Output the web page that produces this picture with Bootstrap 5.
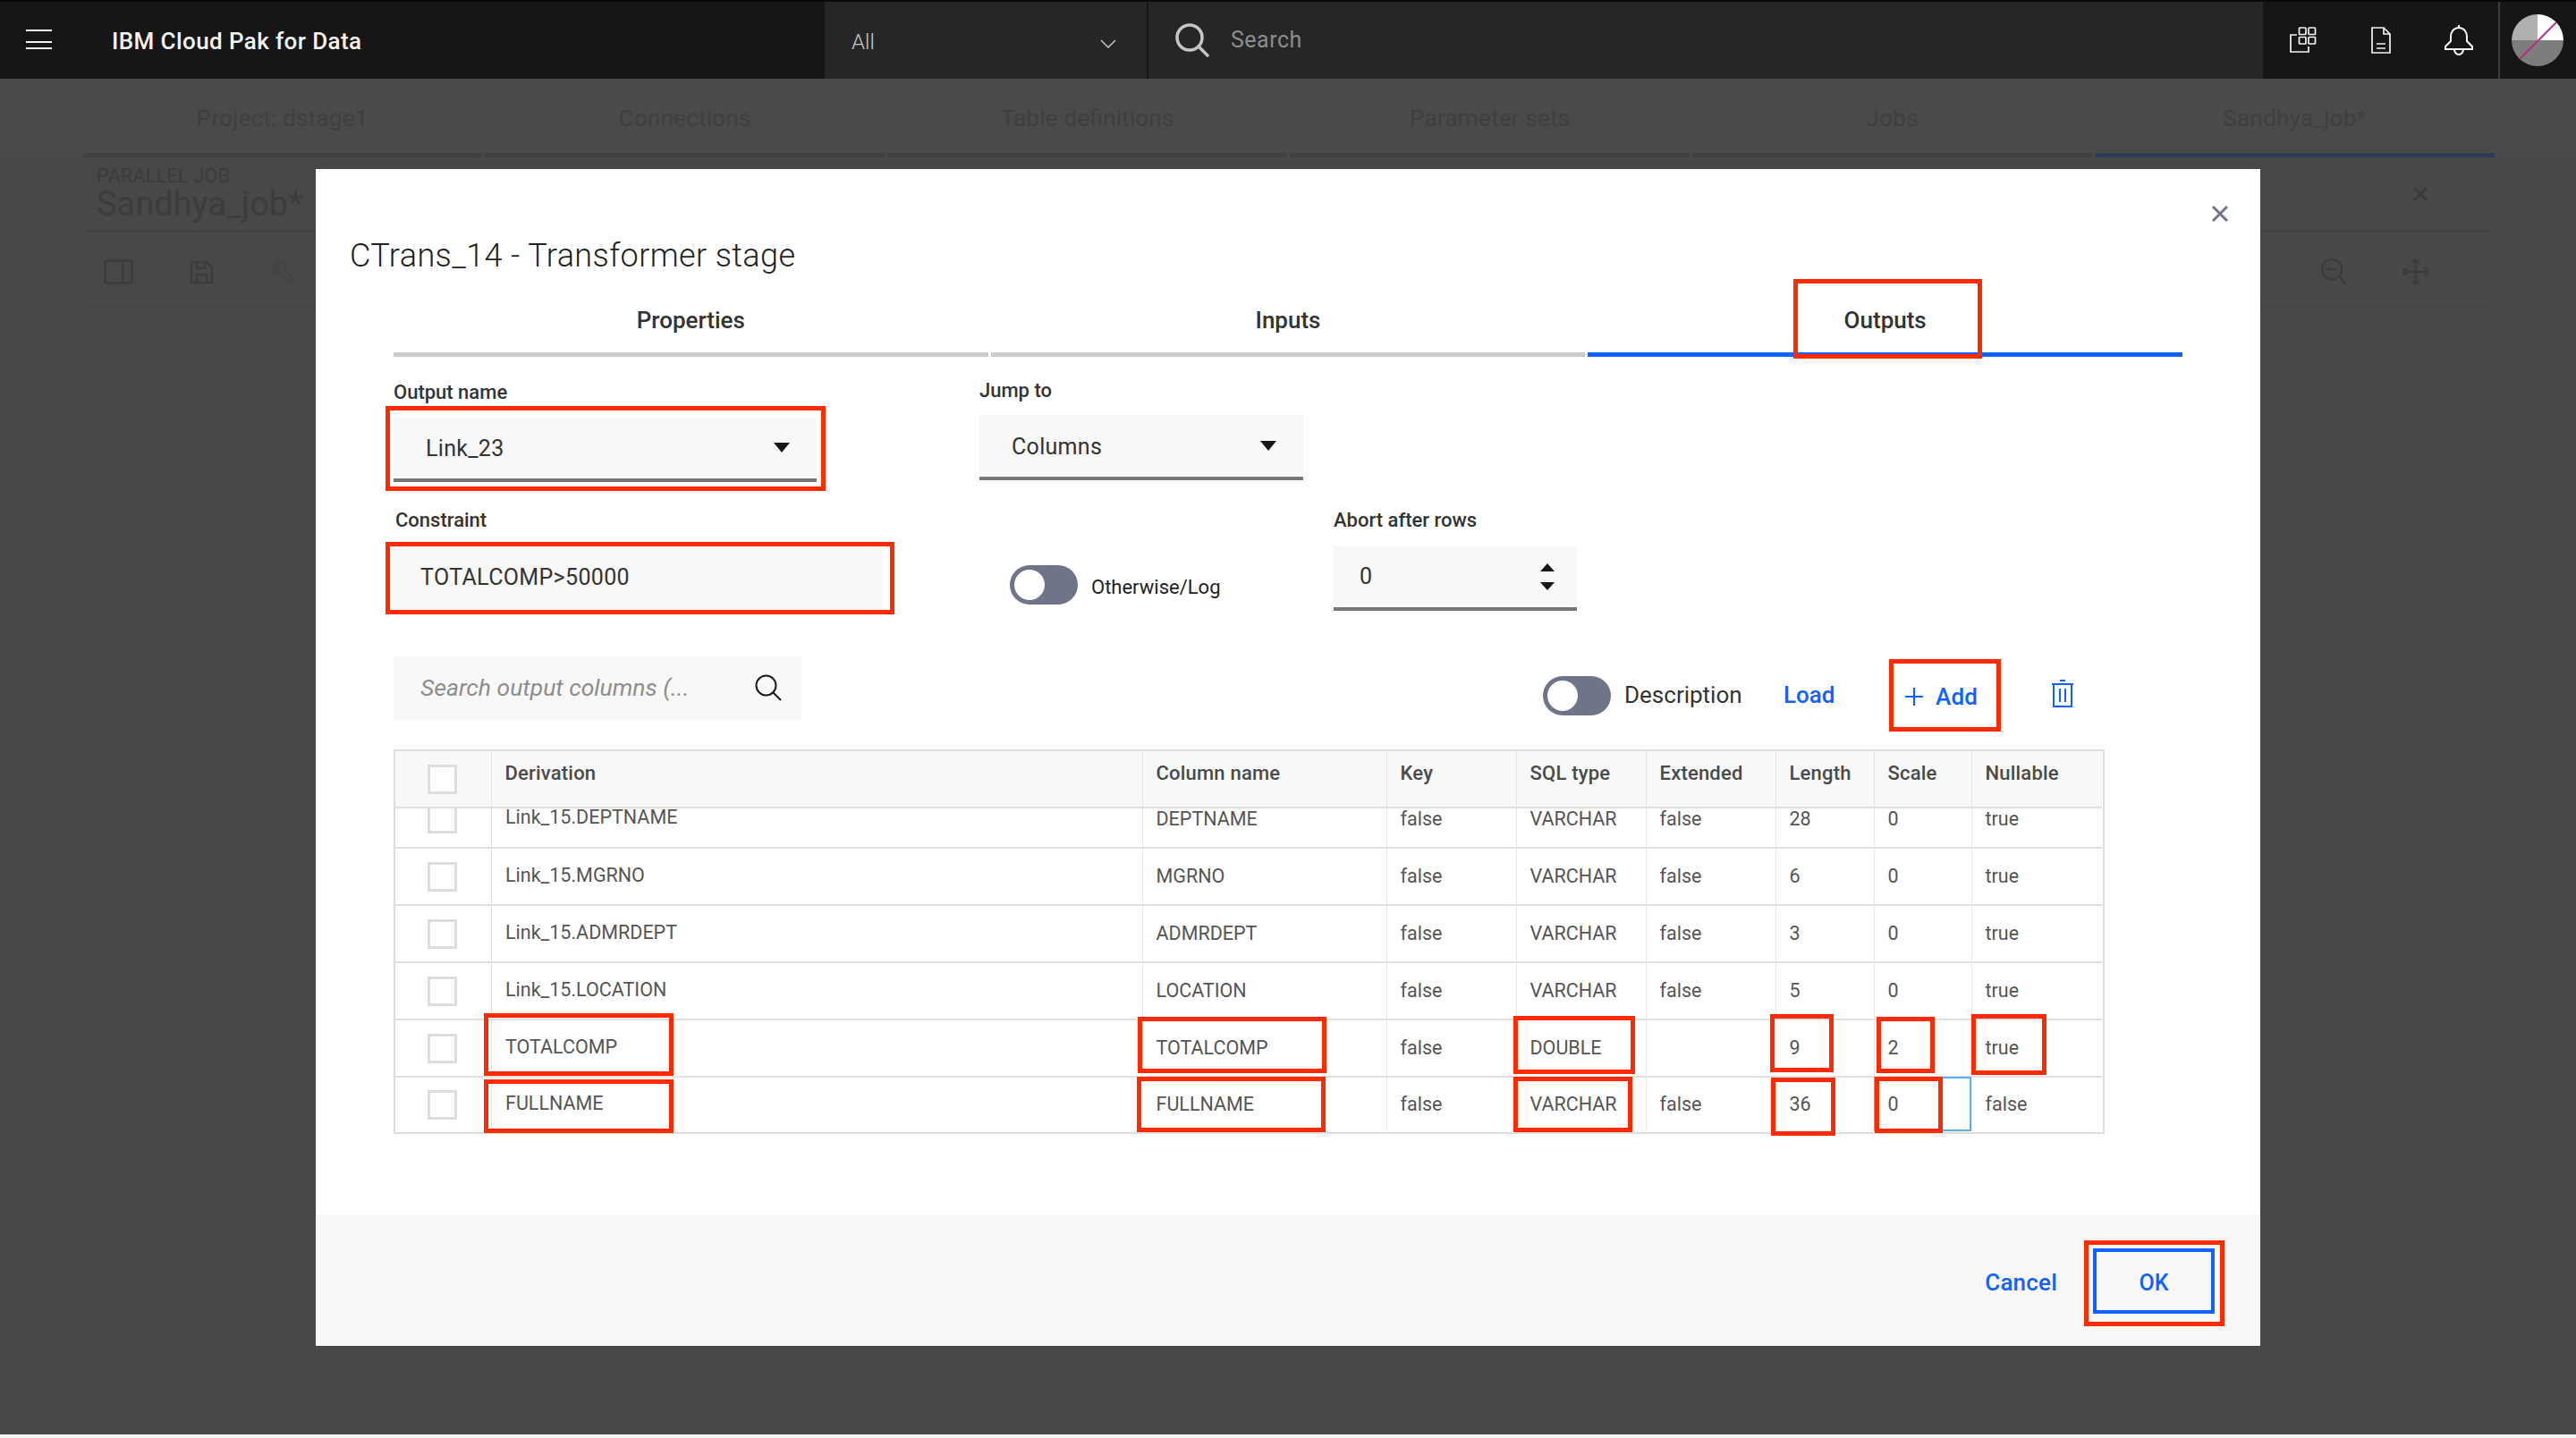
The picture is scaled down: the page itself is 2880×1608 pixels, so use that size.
<!DOCTYPE html>
<html lang="en">
<head>
<meta charset="utf-8">
<title>IBM Cloud Pak for Data</title>
<link href="https://cdn.jsdelivr.net/npm/bootstrap@5.3.0/dist/css/bootstrap.min.css" rel="stylesheet">
<style>
html,body{width:2880px;height:1608px;overflow:hidden;margin:0;background:#f4f4f4;font-family:Roboto,"Liberation Sans",sans-serif;color:#333}
.app-shell{position:relative;width:2880px;height:1604px;background:#484848;overflow:hidden}
/* top bar */
.top-bar{height:88px;padding:0;border-top:2px solid #0a0a0a;background:#161616;flex-wrap:nowrap;justify-content:flex-start;align-items:stretch}
.burger-zone{width:125px;padding-left:29px}
.brand-name{width:797px;padding:2px 0 0;margin:0;font-size:26px;font-weight:500;color:#f4f4f4;letter-spacing:.4px}
.scope-zone{width:362px;background:#262626;border-right:2px solid #161616;padding:3px 34px 0 30px;font-size:24px;color:#c6c6c6;font-weight:300}
.scope-chev{margin-top:5px}
.search-zone{width:1246px;background:#262626;padding-left:30px;gap:24px;font-size:25px;color:#8d8d8d;letter-spacing:.5px}
.tool-zone{width:263px;padding:0 28px 0 30px;justify-content:space-between}
.user-zone{width:87px;border-left:2px solid #3d3d3d;justify-content:center;padding-right:2px}
/* dimmed workspace */
.work-tabs{height:88px;padding-left:92px;background:#4a4a4a;gap:3px}
.work-tab{width:447px;height:88px;border-bottom:5px solid #414141;color:#3f3f3f;font-size:26.5px;text-align:center;line-height:88px}
.work-tab-on{border-bottom-color:#2e3c54}
.job-head{margin:0 91px 0 92px;height:84px;border-bottom:3px solid #454545;padding:10px 16px 0;justify-content:space-between}
.job-kind{font-size:22px;line-height:22px;color:#3c3c3c}
.job-name{font-size:38px;line-height:40px;color:#3c3c3c}
.job-x{margin:23px 59px 0 0}
.job-tools{margin:0 91px 0 92px;height:85px;padding-top:6px;border-bottom:3px solid #454545;justify-content:space-between}
.tool-left{gap:63px;padding-left:24px}
.tool-right{gap:63px;padding-right:73px}
/* modal */
.dialog-box{position:absolute;left:353px;top:189px;width:2174px;height:1316px;border:0;border-radius:0;background:#fff;display:flex;flex-direction:column}
.dialog-main{flex:1 1 auto;padding:74px 0 0 87px;position:relative}
.dialog-title{margin:0 0 0 -49px;height:45px;line-height:46px;font-size:36px;font-weight:300;color:#222;letter-spacing:.4px}
.close-x{position:absolute;left:2118px;top:39px;width:22px;height:22px;padding:0;border:0;background:none;line-height:0}
.step-tabs{margin-top:17px;width:2000px;gap:3px;flex-wrap:nowrap}
.step-tab{flex:1 1 0;height:74px;border:0;border-bottom:5px solid #ccc;background:none;text-align:center;font-size:26px;font-weight:500;color:#333;line-height:67px;padding:0;border-radius:0}
.step-tab.active{border-bottom-color:#0f62fe;color:#333}
/* form */
.fld-label{display:block;margin:0;height:28px;line-height:28px;font-size:22px;font-weight:500;color:#333}
.row-a{padding-top:26px;width:2000px}
.fld-a{width:473px}
.fld-b{width:362px;margin:-2px 0 0 182px}
.fld-a .fld-label,.fld-b .fld-label{margin-bottom:13px}
.flat-select{height:73px;padding:3px 60px 0 36px;border:0;border-bottom:4px solid #777;border-radius:0;background-color:#f8f8f8;font-size:25px;letter-spacing:.3px;color:#333;background-image:url("data:image/svg+xml,%3Csvg xmlns='http://www.w3.org/2000/svg' viewBox='0 0 18 11'%3E%3Cpath fill='%23161616' d='M0 0h18L9 11z'/%3E%3C/svg%3E");background-size:18px 11px;background-position:right 30px center;background-repeat:no-repeat}
.row-b{margin-top:29px}
.fld-c{width:689px}
.fld-c .fld-label{margin:0 0 16px 2px}
.flat-input{display:block;height:69px;width:551px;margin-left:-4px;padding:0 34px 3px;border:0;border-radius:0;background:#f8f8f8;font-size:25px;letter-spacing:.35px;color:#333}
.fld-t{width:362px;padding-top:64px;gap:15px;align-items:flex-start}
.pill{display:block;flex:none;width:76px;height:44px;border-radius:22px;background:#6f7489;position:relative}
.pill::after{content:"";position:absolute;left:5px;top:5px;width:34px;height:34px;border-radius:50%;background:#fff}
.pill-text{font-size:22px;font-weight:400;color:#222;line-height:50px}
.fld-n{width:272px}
.fld-n .fld-label{margin-bottom:14px}
.num-box{height:73px;padding:0 24px 0 29px;background:#f8f8f8;border-bottom:4px solid #777;font-size:25px;justify-content:space-between}
.row-c{margin-top:51px;width:1913px;justify-content:space-between;align-items:flex-start}
.find-box{width:456px;height:72px;background:#f8f8f8;padding:0 22px 2px 30px;justify-content:space-between}
.find-input{border:0;background:none;padding:0;width:320px;font-size:26.5px;font-style:italic;color:#555;outline:0}
.find-input::placeholder{color:#8d8d8d;opacity:1}
.row-tools{margin-top:21px;padding-right:34px}
.row-tools .pill{margin-right:15px}
.desc-text{font-size:26px;color:#333;width:178px;line-height:44px;padding-bottom:2px}
.act-link{padding:0 0 2px;border:0;border-radius:0;font-size:26px;font-weight:500;color:#0f62fe;text-decoration:none;line-height:44px;text-align:left}
.act-load{width:136px}
.act-add{width:163px;gap:14px;padding:2px 0 0;letter-spacing:.2px}
.bin-icon{margin-top:-6px}
/* table */
.grid-wrap{margin-top:32px;width:1913px;border:2px solid #ddd;overflow:hidden}
.grid-body{height:362px;overflow:hidden}
.grid-table{table-layout:fixed;width:1908px;margin:0;font-size:21.5px;line-height:22px;color:#555;border-collapse:collapse}
.grid-table>thead>tr>th,.grid-table>tbody>tr>td{padding:0 0 0 15px;border:0;border-left:1px solid #eaeaea;box-shadow:none;background:transparent;font-weight:400;color:#555}
.grid-table>tbody>tr>td{vertical-align:middle;border-bottom:2px solid #e0e0e0}
.grid-table>thead>tr>th{height:63px;background:#f8f8f8;border-left-color:#e4e4e4;border-bottom:2px solid #e0e0e0;vertical-align:top;padding-top:14px;font-size:22px;letter-spacing:.2px;font-weight:500;color:#4a4a4a}
.grid-table>thead>tr>th:first-child,.grid-table>tbody>tr>td:first-child{border-left:0;padding:0}
.grid-table>thead>tr>th:first-child{vertical-align:middle;padding:0}
.grid-table>tbody>tr>td:nth-child(2){padding-left:15.5px;padding-bottom:3px;border-left-color:#e0e0e0}
.grid-table tbody tr{height:64px}
.grid-table tbody tr:last-child{height:61px}
.grid-table tbody tr:last-child>td{border-bottom:0}
.scrolled{margin-top:-20px}
.tick{display:block;width:33px;height:33px;margin-left:36px;border:3px solid #ddd;background:#fff}
.c0{width:107px}.c1{width:728px}.c2{width:273px}.c3,.c4,.c5{width:145px}.c6{width:110px}.c7{width:109px}.c8{width:146px}
/* footer */
.dialog-foot{flex:none;height:146px;padding:0 51px 0 0;border:0;border-radius:0;background:#f8f8f8;justify-content:flex-end;align-items:center;flex-wrap:nowrap;gap:40px}
.dialog-foot>*{margin:0}
.foot-cancel{padding:4px 0 0;border:0;font-size:26px;letter-spacing:.2px;font-weight:500;color:#0f62fe;text-decoration:none}
.foot-ok{width:136px;height:73px;padding:5px 0 0;border:4px solid #0f62fe;border-radius:0;background:none;font-size:25px;font-weight:500;color:#0f62fe}
/* annotations over the screenshot */
.mark-box{position:absolute;border:5px solid #ff2a00;pointer-events:none}
.sel-cell{position:absolute;left:2095px;top:1204px;width:109px;height:61px;border:2px solid #5aaef0}
.m1{left:2005px;top:312px;width:211px;height:89px}
.m2{left:431px;top:454px;width:492px;height:95px}
.m3{left:431px;top:606px;width:569px;height:81px}
.m4{left:2112px;top:737px;width:125px;height:81px}
.m5{left:541px;top:1133px;width:212px;height:70px}
.m6{left:541px;top:1207px;width:212px;height:60px}
.m7{left:1272px;top:1137px;width:211px;height:63px}
.m8{left:1271px;top:1204px;width:211px;height:62px}
.m9{left:1692px;top:1136px;width:136px;height:65px}
.m10{left:1692px;top:1204px;width:133px;height:62px}
.m11{left:1979px;top:1134px;width:71px;height:65px}
.m12{left:1980px;top:1205px;width:72px;height:65px}
.m13{left:2098px;top:1137px;width:65px;height:63px}
.m14{left:2096px;top:1204px;width:76px;height:63px}
.m15{left:2204px;top:1134px;width:84px;height:68px}
.m16{left:2330px;top:1387px;width:157px;height:96px}
</style>
</head>
<body>
<div class="app-shell">
  <nav class="navbar top-bar">
    <div class="burger-zone d-flex align-items-center">
      <svg width="29" height="24" viewBox="0 0 29 24"><path d="M0 1h29M0 14h29M0 21h29" stroke="#f4f4f4" stroke-width="2"/></svg>
    </div>
    <span class="navbar-brand brand-name d-flex align-items-center">IBM Cloud Pak for Data</span>
    <div class="scope-zone d-flex align-items-center justify-content-between">
      <span>All</span>
      <svg class="scope-chev" width="18" height="10" viewBox="0 0 18 10"><path d="M1 1l8 8 8-8" fill="none" stroke="#c6c6c6" stroke-width="1.5"/></svg>
    </div>
    <div class="search-zone d-flex align-items-center">
      <svg width="38" height="38" viewBox="0 0 38 38"><circle cx="16" cy="16" r="14" fill="none" stroke="#c6c6c6" stroke-width="3.5"/><path d="M26 26l10 10" stroke="#c6c6c6" stroke-width="3.5" stroke-linecap="round"/></svg>
      <span>Search</span>
    </div>
    <div class="tool-zone d-flex align-items-center">
      <svg width="30" height="30" viewBox="0 0 30 30" fill="none" stroke="#f4f4f4" stroke-width="1.7"><rect x="10.5" y="1" width="7.5" height="7.5" rx=".8"/><rect x="21" y="1" width="7.5" height="7.5" rx=".8"/><rect x="10.5" y="11.5" width="7.5" height="7.5" rx=".8"/><rect x="21" y="11.5" width="7.5" height="7.5" rx=".8"/><path d="M8 9H1v19h20v-6"/></svg>
      <svg width="22" height="30" viewBox="0 0 22 30" fill="none" stroke="#f4f4f4" stroke-width="1.7"><path d="M1 1h13l7 7v21H1zM14 1v7h7M6 19h10M6 24h10"/></svg>
      <svg width="32" height="36" viewBox="0 0 32 36" fill="none" stroke="#f4f4f4" stroke-width="2"><path d="M16 4c-6 0-9 5-9 10v5l-6 6v3h30v-3l-6-6v-5c0-5-3-10-9-10zM16 4V1M11 28a5 6 0 0 0 10 0"/></svg>
    </div>
    <div class="user-zone d-flex align-items-center">
      <svg width="58" height="58" viewBox="0 0 58 58"><path d="M29 29V0A29 29 0 0 0 0 29z" fill="#b0b0b0"/><path d="M29 29V0a29 29 0 0 1 29 29z" fill="#fff"/><path d="M0 29a29 29 0 0 0 58 0z" fill="#7d7d7d"/><path d="M50 9L9 50" stroke="#b3307f" stroke-width="2"/></svg>
    </div>
  </nav>

  <div class="work-tabs d-flex">
    <div class="work-tab">Project: dstage1</div>
    <div class="work-tab">Connections</div>
    <div class="work-tab">Table definitions</div>
    <div class="work-tab">Parameter sets</div>
    <div class="work-tab">Jobs</div>
    <div class="work-tab work-tab-on">Sandhya_job*</div>
  </div>
  <div class="job-head d-flex">
    <div>
      <div class="job-kind">PARALLEL JOB</div>
      <div class="job-name">Sandhya_job*</div>
    </div>
    <svg class="job-x" width="16" height="16" viewBox="0 0 16 16"><path d="M1 1l14 14M15 1L1 15" stroke="#3a3a3a" stroke-width="3"/></svg>
  </div>
  <div class="job-tools d-flex align-items-center">
    <div class="tool-left d-flex align-items-center">
      <svg width="33" height="28" viewBox="0 0 33 28" fill="none" stroke="#3c3c3c" stroke-width="2.5"><rect x="1.5" y="1.5" width="30" height="25" rx="1"/><path d="M21 1.5v25"/></svg>
      <svg width="27" height="27" viewBox="0 0 27 27" fill="none" stroke="#3c3c3c" stroke-width="2.5"><path d="M2 2h17l6 6v17H2zM8 2v7h9V2M8 25v-9h11v9"/></svg>
      <svg width="30" height="30" viewBox="0 0 30 30" fill="none" stroke="#444" stroke-width="2.5"><path d="M3 8a7 7 0 0 0 9 9l11 11 4-4-11-11a7 7 0 0 0-9-9l4 5-3 4z"/></svg>
    </div>
    <div class="tool-right d-flex align-items-center">
      <svg width="28" height="30" viewBox="0 0 28 30" fill="none" stroke="#3c3c3c" stroke-width="2.5"><circle cx="12" cy="12" r="11"/><path d="M6 12h12M20 20l8 9"/></svg>
      <svg width="30" height="30" viewBox="0 0 30 30" fill="none" stroke="#3c3c3c" stroke-width="2.5"><path d="M15 1v28M1 15h28M11 5l4-4 4 4M11 25l4 4 4-4M5 11l-4 4 4 4M25 11l4 4-4 4"/></svg>
    </div>
  </div>

  <div class="modal-content dialog-box">
    <div class="dialog-main">
      <button class="close-x" type="button" aria-label="Close"><svg width="22" height="22" viewBox="0 0 22 22"><path d="M3 3l16 16M19 3L3 19" stroke="#6f7489" stroke-width="3"/></svg></button>
      <h4 class="modal-title dialog-title">CTrans_14 - Transformer stage</h4>
      <ul class="nav step-tabs d-flex list-unstyled">
        <li class="nav-item step-tab"><span>Properties</span></li>
        <li class="nav-item step-tab"><span>Inputs</span></li>
        <li class="nav-item step-tab active"><span>Outputs</span></li>
      </ul>

      <div class="row-a d-flex align-items-start">
        <div class="fld-a">
          <label class="form-label fld-label">Output name</label>
          <div class="form-select flat-select d-flex align-items-center">Link_23</div>
        </div>
        <div class="fld-b">
          <label class="form-label fld-label">Jump to</label>
          <div class="form-select flat-select d-flex align-items-center">Columns</div>
        </div>
      </div>

      <div class="row-b d-flex align-items-start">
        <div class="fld-c">
          <label class="form-label fld-label">Constraint</label>
          <input class="form-control flat-input" type="text" value="TOTALCOMP&gt;50000">
        </div>
        <div class="fld-t d-flex">
          <span class="pill"></span>
          <span class="pill-text">Otherwise/Log</span>
        </div>
        <div class="fld-n">
          <label class="form-label fld-label">Abort after rows</label>
          <div class="num-box d-flex align-items-center">
            <span>0</span>
            <svg width="18" height="30" viewBox="0 0 18 30"><path d="M9 0l8 9H1zM1 21h16l-8 9z" fill="#161616"/></svg>
          </div>
        </div>
      </div>

      <div class="row-c d-flex">
        <div class="find-box d-flex align-items-center">
          <input class="find-input" type="text" placeholder="Search output columns (...">
          <svg width="30" height="30" viewBox="0 0 30 30" fill="none" stroke="#161616" stroke-width="2"><circle cx="12.5" cy="12.5" r="11"/><path d="M20.5 20.5l8.5 8.5"/></svg>
        </div>
        <div class="row-tools d-flex align-items-center">
          <span class="pill"></span>
          <span class="desc-text">Description</span>
          <a class="btn btn-link act-link act-load" href="#">Load</a>
          <a class="btn btn-link act-link act-add d-flex align-items-center" href="#"><svg width="20" height="20" viewBox="0 0 20 20"><path d="M10 0v20M0 10h20" stroke="#0f62fe" stroke-width="2.2"/></svg>Add</a>
          <svg class="bin-icon" width="26" height="31" viewBox="0 0 26 31" fill="none" stroke="#0f62fe" stroke-width="2"><path d="M1 5h24M10 1h6M3 5v25h20V5M10 10v15M16 10v15"/></svg>
        </div>
      </div>

      <div class="grid-wrap">
        <table class="table grid-table">
          <colgroup><col class="c0"><col class="c1"><col class="c2"><col class="c3"><col class="c4"><col class="c5"><col class="c6"><col class="c7"><col class="c8"></colgroup>
          <thead><tr><th><span class="tick"></span></th><th>Derivation</th><th>Column name</th><th>Key</th><th>SQL type</th><th>Extended</th><th>Length</th><th>Scale</th><th>Nullable</th></tr></thead>
        </table>
        <div class="grid-body">
          <table class="table grid-table scrolled">
            <colgroup><col class="c0"><col class="c1"><col class="c2"><col class="c3"><col class="c4"><col class="c5"><col class="c6"><col class="c7"><col class="c8"></colgroup>
            <tbody>
              <tr><td><span class="tick"></span></td><td>Link_15.DEPTNAME</td><td>DEPTNAME</td><td>false</td><td>VARCHAR</td><td>false</td><td>28</td><td>0</td><td>true</td></tr>
              <tr><td><span class="tick"></span></td><td>Link_15.MGRNO</td><td>MGRNO</td><td>false</td><td>VARCHAR</td><td>false</td><td>6</td><td>0</td><td>true</td></tr>
              <tr><td><span class="tick"></span></td><td>Link_15.ADMRDEPT</td><td>ADMRDEPT</td><td>false</td><td>VARCHAR</td><td>false</td><td>3</td><td>0</td><td>true</td></tr>
              <tr><td><span class="tick"></span></td><td>Link_15.LOCATION</td><td>LOCATION</td><td>false</td><td>VARCHAR</td><td>false</td><td>5</td><td>0</td><td>true</td></tr>
              <tr><td><span class="tick"></span></td><td>TOTALCOMP</td><td>TOTALCOMP</td><td>false</td><td>DOUBLE</td><td></td><td>9</td><td>2</td><td>true</td></tr>
              <tr><td><span class="tick"></span></td><td>FULLNAME</td><td>FULLNAME</td><td>false</td><td>VARCHAR</td><td>false</td><td>36</td><td>0</td><td>false</td></tr>
            </tbody>
          </table>
        </div>
      </div>
    </div>
    <div class="modal-footer dialog-foot">
      <a class="btn btn-link foot-cancel" href="#">Cancel</a>
      <button class="btn foot-ok" type="button">OK</button>
    </div>
  </div>

  <div class="sel-cell"></div>
  <div class="mark-box m1"></div><div class="mark-box m2"></div><div class="mark-box m3"></div><div class="mark-box m4"></div>
  <div class="mark-box m5"></div><div class="mark-box m6"></div><div class="mark-box m7"></div><div class="mark-box m8"></div>
  <div class="mark-box m9"></div><div class="mark-box m10"></div><div class="mark-box m11"></div><div class="mark-box m12"></div>
  <div class="mark-box m13"></div><div class="mark-box m14"></div><div class="mark-box m15"></div><div class="mark-box m16"></div>
</div>
<script src="https://cdn.jsdelivr.net/npm/bootstrap@5.3.0/dist/js/bootstrap.bundle.min.js"></script>
</body>
</html>
